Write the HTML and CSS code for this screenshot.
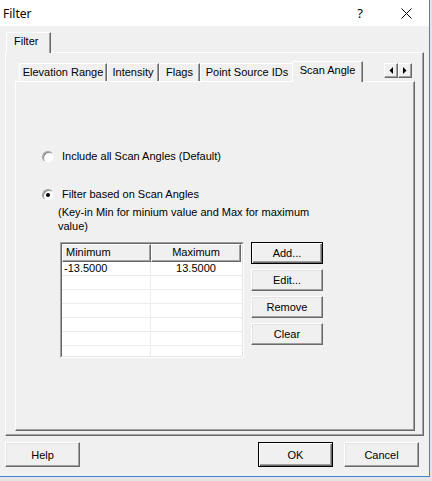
FILE: index.html
```html
<!DOCTYPE html>
<html>
<head>
<meta charset="utf-8">
<link rel="stylesheet" href="styles.css">
</head>
<body>
<div class="window">
  <div class="titlebar">
    <span class="title">Filter</span>
    <span class="cap-btn cap-help">?</span>
    <span class="cap-btn"><svg width="11" height="11" viewBox="0 0 11 11"><path d="M0.5 0.5 L10.5 10.5 M10.5 0.5 L0.5 10.5" stroke="#000" stroke-width="1" fill="none"/></svg></span>
  </div>
  <div class="client">
    <div class="outer-tabs"><div class="tab-outer">Filter</div></div>
    <div class="outer-panel">
      <div class="inner-tabs">
        <div class="itab w-elev">Elevation Range</div>
        <div class="itab w-int">Intensity</div>
        <div class="itab w-flags">Flags</div>
        <div class="itab w-psid">Point Source IDs</div>
        <div class="itab selected w-scan">Scan Angle</div>
        <div class="spin">
          <div class="spin-btn"><svg width="4" height="7" viewBox="0 0 4 7"><polygon points="4,0 4,7 0.5,3.5" fill="#000"/></svg></div>
          <div class="spin-btn"><svg width="4" height="7" viewBox="0 0 4 7"><polygon points="0,0 0,7 3.5,3.5" fill="#000"/></svg></div>
        </div>
      </div>
      <div class="inner-panel">
        <div class="option"><span class="radio"></span><span>Include all Scan Angles (Default)</span></div>
        <div class="option second"><span class="radio"><span class="dot"></span></span><span>Filter based on Scan Angles</span></div>
        <div class="hint">(Key-in Min for minium value and Max for maximum<br>value)</div>
        <div class="editor">
          <div class="list">
            <div class="list-inner">
              <div class="lv-head">
                <div class="hcell h1">Minimum</div>
                <div class="hcell h2">Maximum</div>
              </div>
              <div class="lv-row"><div class="c1">-13.5000</div><div class="c2">13.5000</div></div>
              <div class="lv-row"><div class="c1"></div><div class="c2"></div></div>
              <div class="lv-row"><div class="c1"></div><div class="c2"></div></div>
              <div class="lv-row"><div class="c1"></div><div class="c2"></div></div>
              <div class="lv-row"><div class="c1"></div><div class="c2"></div></div>
              <div class="lv-row"><div class="c1"></div><div class="c2"></div></div>
              <div class="lv-row"><div class="c1"></div><div class="c2"></div></div>
            </div>
          </div>
          <div class="btn-col">
            <div class="btn default">Add...</div>
            <div class="btn">Edit...</div>
            <div class="btn">Remove</div>
            <div class="btn">Clear</div>
          </div>
        </div>
      </div>
    </div>
    <div class="footer">
      <div class="btn fbtn">Help</div>
      <div class="btn fbtn default ok">OK</div>
      <div class="btn fbtn cancel">Cancel</div>
    </div>
  </div>
</div>
</body>
</html>
```

FILE: styles.css
```css
* { box-sizing: border-box; }
html, body { margin: 0; padding: 0; }
body {
  background: #e4e4e4;
  width: 432px;
  height: 481px;
  overflow: hidden;
  font-family: "Liberation Sans", Arial, sans-serif;
  font-size: 11px;
  color: #000;
}
.window {
  width: 430px;
  height: 477px;
  background: #f0f0f0;
  border-right: 1px solid #3a86d4;
  border-bottom: 1px solid #3a86d4;
  display: flex;
  flex-direction: column;
}
.titlebar {
  height: 26px;
  flex-shrink: 0;
  background: #fff;
  display: flex;
  align-items: center;
}
.title {
  flex: 1;
  padding-left: 3px;
  font-family: "Noto Sans", "Open Sans", sans-serif;
  font-size: 12px;
}
.cap-btn {
  width: 46px;
  height: 26px;
  display: flex;
  align-items: center;
  justify-content: center;
}
.cap-help {
  font-family: "Noto Sans", sans-serif;
  font-size: 13px;
}
.client {
  padding: 6px 5px 0 5px;
}
.outer-tabs {
  display: flex;
  height: 20px;
  padding-left: 1px;
}
.tab-outer {
  position: relative;
  z-index: 1;
  width: 45px;
  height: 21px;
  background: #f0f0f0;
  border: 1px solid;
  border-color: #fff #696969 transparent #fff;
  border-bottom: none;
  box-shadow: inset -1px 0 #a0a0a0;
  padding-left: 7px;
  line-height: 16px;
}
.outer-panel {
  width: 419px;
  height: 384px;
  border: 1px solid;
  border-color: #fff #696969 #696969 #fff;
  box-shadow: inset -1px -1px #a0a0a0;
  padding: 8px 0 0 9px;
}
.inner-tabs {
  display: flex;
  align-items: flex-end;
  height: 20px;
  width: 400px;
  padding-left: 4px;
}
.itab {
  height: 18px;
  border: 1px solid;
  border-color: #fff #696969 transparent #fff;
  border-bottom: none;
  box-shadow: inset -1px 0 #a0a0a0;
  text-align: center;
  line-height: 17px;
  white-space: nowrap;
  background: #f0f0f0;
}
.itab.selected {
  position: relative;
  z-index: 1;
  height: 21px;
  margin: 0 0 -1px -2px;
}
.w-elev { width: 88px; }
.w-int { width: 52px; }
.w-flags { width: 41px; }
.w-psid { width: 94px; }
.w-scan { width: 71px; }
.spin {
  display: flex;
  align-self: flex-start;
  margin: 2px 3px 0 auto;
}
.spin-btn {
  width: 14px;
  height: 15px;
  border: 1px solid;
  border-color: #fff #696969 #696969 #fff;
  box-shadow: inset -1px -1px #a0a0a0;
  background: #f0f0f0;
  display: flex;
  align-items: center;
  justify-content: center;
}
.inner-panel {
  width: 400px;
  height: 350px;
  border: 1px solid;
  border-color: #fff #696969 #696969 #fff;
  box-shadow: inset -1px -1px #a0a0a0;
  padding: 68px 0 0 26px;
}
.option {
  display: flex;
  align-items: center;
  height: 13px;
  line-height: 13px;
  white-space: nowrap;
}
.option.second { margin-top: 25px; }
.radio {
  width: 12px;
  height: 12px;
  flex-shrink: 0;
  margin-right: 8px;
  border-radius: 50%;
  background: #fff;
  border: 1px solid;
  border-color: #a0a0a0 #f4f4f4 #f4f4f4 #a0a0a0;
  box-shadow: inset 1px 1px #8a8a8a;
  display: flex;
  align-items: center;
  justify-content: center;
}
.dot {
  width: 4px;
  height: 4px;
  border-radius: 50%;
  background: #000;
}
.hint {
  margin-top: 4px;
  padding-left: 16px;
  line-height: 14px;
  white-space: nowrap;
}
.editor {
  display: flex;
  align-items: flex-start;
  margin-top: 9px;
  margin-left: 18px;
}
.list {
  width: 184px;
  height: 116px;
  border: 1px solid;
  border-color: #a0a0a0 #fff #fff #a0a0a0;
}
.list-inner {
  height: 100%;
  border: 1px solid;
  border-color: #696969 #e3e3e3 #e3e3e3 #696969;
  background: #fff;
  overflow: hidden;
}
.lv-head {
  display: flex;
  height: 18px;
}
.hcell {
  height: 18px;
  background: #f0f0f0;
  border: 1px solid;
  border-color: #fff #696969 #696969 #fff;
  box-shadow: inset -1px -1px #a0a0a0;
  line-height: 15px;
  white-space: nowrap;
}
.h1 { width: 89px; padding-left: 3px; }
.h2 { width: 90px; text-align: center; }
.lv-row {
  display: flex;
  height: 14px;
  line-height: 13px;
  border-bottom: 1px solid #ececec;
}
.c1 {
  width: 89px;
  padding-left: 2px;
  border-right: 1px solid #ececec;
}
.c2 {
  width: 90px;
  text-align: center;
}
.btn-col {
  display: flex;
  flex-direction: column;
  gap: 5px;
  margin-left: 7px;
}
.btn {
  width: 72px;
  height: 22px;
  background: #f0f0f0;
  border: 1px solid;
  border-color: #fff #696969 #696969 #fff;
  box-shadow: inset -1px -1px #a0a0a0, inset 1px 1px #e3e3e3;
  display: flex;
  align-items: center;
  justify-content: center;
  white-space: nowrap;
}
.btn.default {
  border-color: #000;
  box-shadow: inset 1px 1px #fff, inset -1px -1px #696969, inset -2px -2px #a0a0a0;
}
.footer {
  display: flex;
  margin-top: 6px;
  padding-right: 5px;
}
.fbtn {
  width: 75px;
  height: 25px;
}
.ok { margin-left: auto; }
.cancel { margin-left: 11px; }
```
